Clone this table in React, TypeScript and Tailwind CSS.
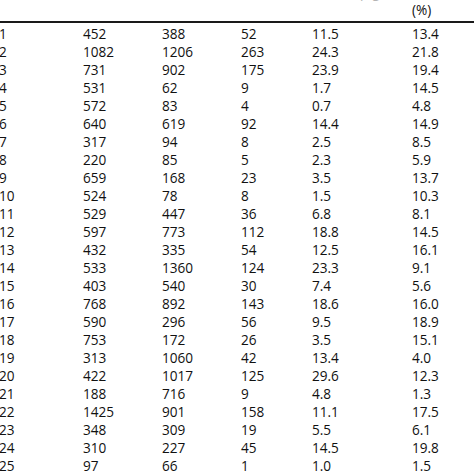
const rows: string[][] = [
  ['1', '452', '388', '52', '11.5', '13.4'],
  ['2', '1082', '1206', '263', '24.3', '21.8'],
  ['3', '731', '902', '175', '23.9', '19.4'],
  ['4', '531', '62', '9', '1.7', '14.5'],
  ['5', '572', '83', '4', '0.7', '4.8'],
  ['6', '640', '619', '92', '14.4', '14.9'],
  ['7', '317', '94', '8', '2.5', '8.5'],
  ['8', '220', '85', '5', '2.3', '5.9'],
  ['9', '659', '168', '23', '3.5', '13.7'],
  ['10', '524', '78', '8', '1.5', '10.3'],
  ['11', '529', '447', '36', '6.8', '8.1'],
  ['12', '597', '773', '112', '18.8', '14.5'],
  ['13', '432', '335', '54', '12.5', '16.1'],
  ['14', '533', '1360', '124', '23.3', '9.1'],
  ['15', '403', '540', '30', '7.4', '5.6'],
  ['16', '768', '892', '143', '18.6', '16.0'],
  ['17', '590', '296', '56', '9.5', '18.9'],
  ['18', '753', '172', '26', '3.5', '15.1'],
  ['19', '313', '1060', '42', '13.4', '4.0'],
  ['20', '422', '1017', '125', '29.6', '12.3'],
  ['21', '188', '716', '9', '4.8', '1.3'],
  ['22', '1425', '901', '158', '11.1', '17.5'],
  ['23', '348', '309', '19', '5.5', '6.1'],
  ['24', '310', '227', '45', '14.5', '19.8'],
  ['25', '97', '66', '1', '1.0', '1.5'],
]

const cols = 'grid grid-cols-[84px_79px_79px_71px_100px_1fr]'

export default function App() {
  return (
    <div
      className="h-[474px] w-[474px] overflow-hidden bg-white text-[13.6px] leading-[18px] text-[#111]"
      style={{ fontFamily: '"Open Sans", "DejaVu Sans", sans-serif' }}
    >
      {/* header, upper line cut off by the crop */}
      <div className="-mt-[17px] pb-[2px]">
        <div className={`${cols} -ml-[1px]`}>
          <span />
          <span />
          <span />
          <span />
          <span className="pl-[48px] text-[#b4b4b4]">p(g)</span>
          <span />
        </div>
        <div className={`${cols} -ml-[1px]`}>
          <span />
          <span />
          <span />
          <span />
          <span />
          <span>(%)</span>
        </div>
      </div>
      <div className="h-[1.5px] bg-[#1a1a1a]" />
      <div className="pt-[2px]">
        {rows.map((r) => (
          <div key={r[0]} className={`${cols} -ml-[1px]`}>
            {r.map((c, i) => (
              <span key={i}>{c}</span>
            ))}
          </div>
        ))}
      </div>
    </div>
  )
}
